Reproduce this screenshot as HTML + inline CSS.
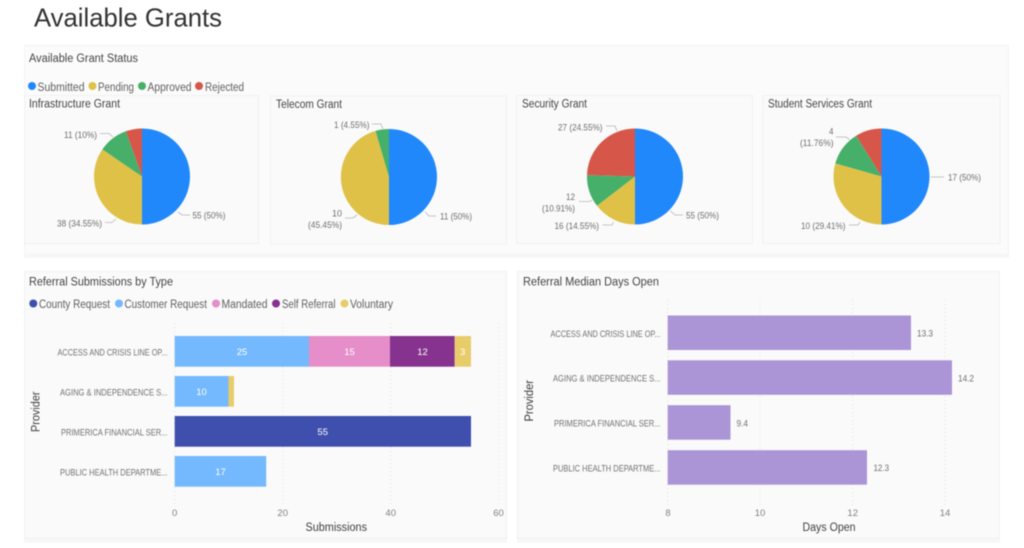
<!DOCTYPE html>
<html lang="en">
<head>
<meta charset="utf-8">
<title>Available Grants</title>
<style>
html,body{margin:0;padding:0;background:#fff;width:1024px;height:548px;overflow:hidden}
svg{display:block;filter:blur(.45px)}
text{font-family:"Liberation Sans",sans-serif}
.t{font-size:11.5px;fill:#444}
.l{font-size:11.5px;fill:#5f5f5f}
.p{font-size:9.5px;fill:#6f6f6f}
.c{font-size:9.5px;fill:#707070}
.a{font-size:9.5px;fill:#808080}
.w{font-size:9.5px;fill:#fff;text-anchor:middle}
.x{font-size:11.5px;fill:#404040}
.ld{fill:none;stroke:#b5b5b5;stroke-width:.8}
.g{stroke:#d8d8d8;stroke-width:.8;stroke-dasharray:1 3}
.card{fill:#fafafa;stroke:#f1f1f1;stroke-width:1}
.outer{fill:#fbfbfb;stroke:#f3f3f3;stroke-width:1}
.sh{fill:#f7f7f7}
</style>
</head>
<body>
<svg width="1024" height="548" viewBox="0 0 1024 548" xmlns="http://www.w3.org/2000/svg">
<rect width="1024" height="548" fill="#fff"/>
<text x="34" y="26.5" font-size="26" fill="#333" textLength="188" lengthAdjust="spacingAndGlyphs">Available Grants</text>

<rect x="24" y="253" width="985" height="5" class="sh"/>
<rect x="24" y="537" width="483" height="6" class="sh"/>
<rect x="517" y="537" width="483" height="6" class="sh"/>
<rect x="24.5" y="45.5" width="984" height="209" class="outer"/>
<text x="29" y="62" class="t" textLength="109" lengthAdjust="spacingAndGlyphs">Available Grant Status</text>

<circle cx="32" cy="86" r="4" fill="#2188fb"/>
<text x="37.5" y="91" class="l" textLength="47" lengthAdjust="spacingAndGlyphs">Submitted</text>
<circle cx="92.5" cy="86" r="4" fill="#dfc147"/>
<text x="98" y="91" class="l" textLength="36" lengthAdjust="spacingAndGlyphs">Pending</text>
<circle cx="142" cy="86" r="4" fill="#46b06a"/>
<text x="147.5" y="91" class="l" textLength="44" lengthAdjust="spacingAndGlyphs">Approved</text>
<circle cx="199" cy="86" r="4" fill="#d6574a"/>
<text x="205" y="91" class="l" textLength="39" lengthAdjust="spacingAndGlyphs">Rejected</text>

<!-- pie cards -->
<rect x="24.5" y="95.5" width="234" height="148" class="card"/>
<rect x="270.5" y="96" width="236" height="148" class="card"/>
<rect x="516.5" y="95.5" width="236" height="148" class="card"/>
<rect x="763" y="95.5" width="237" height="148" class="card"/>
<text x="29" y="107.5" class="t" textLength="91" lengthAdjust="spacingAndGlyphs">Infrastructure Grant</text>
<text x="276" y="108" class="t" textLength="66" lengthAdjust="spacingAndGlyphs">Telecom Grant</text>
<text x="522" y="107.5" class="t" textLength="65" lengthAdjust="spacingAndGlyphs">Security Grant</text>
<text x="768" y="107.5" class="t" textLength="104" lengthAdjust="spacingAndGlyphs">Student Services Grant</text>

<!-- pie 1 -->
<path d="M142 176.5V128.5A48 48 0 0 1 142 224.5Z" fill="#2188fb"/>
<path d="M142 176.5V224.5A48 48 0 0 1 102.4 149.4Z" fill="#dfc147"/>
<path d="M142 176.5L102.4 149.4A48 48 0 0 1 125.9 131.3Z" fill="#46b06a"/>
<path d="M142 176.5L125.9 131.3A48 48 0 0 1 142 128.5Z" fill="#d6574a"/>
<!-- pie 2 -->
<path d="M389 177V129A48 48 0 0 1 389 225Z" fill="#2188fb"/>
<path d="M389 177V225A48 48 0 0 1 375.5 130.9Z" fill="#dfc147"/>
<path d="M389 177L375.5 130.9A48 48 0 0 1 389 129Z" fill="#46b06a"/>
<!-- pie 3 -->
<path d="M635 176.5V128.5A48 48 0 0 1 635 224.5Z" fill="#2188fb"/>
<path d="M635 176.5V224.5A48 48 0 0 1 597 205.8Z" fill="#dfc147"/>
<path d="M635 176.5L597 205.8A48 48 0 0 1 587 175.1Z" fill="#46b06a"/>
<path d="M635 176.5L587 175.1A48 48 0 0 1 635 128.5Z" fill="#d6574a"/>
<!-- pie 4 -->
<path d="M881.5 176.5V128.5A48 48 0 0 1 881.5 224.5Z" fill="#2188fb"/>
<path d="M881.5 176.5V224.5A48 48 0 0 1 835.3 163.4Z" fill="#dfc147"/>
<path d="M881.5 176.5L835.3 163.4A48 48 0 0 1 856.2 135.7Z" fill="#46b06a"/>
<path d="M881.5 176.5L856.2 135.7A48 48 0 0 1 881.5 128.5Z" fill="#d6574a"/>

<!-- pie labels -->
<path class="ld" d="M100 133.5H109L113 137M178 212L182 215H190M116 219L112 222.5H105"/>
<text x="64" y="138" class="p" textLength="33" lengthAdjust="spacingAndGlyphs">11 (10%)</text>
<text x="192.5" y="218.5" class="p" textLength="33" lengthAdjust="spacingAndGlyphs">55 (50%)</text>
<text x="57" y="226.5" class="p" textLength="45" lengthAdjust="spacingAndGlyphs">38 (34.55%)</text>

<path class="ld" d="M372 124H381L383 129M425 212L429 216H436M345 218H353L357 215"/>
<text x="334" y="128" class="p" textLength="35.5" lengthAdjust="spacingAndGlyphs">1 (4.55%)</text>
<text x="440" y="219.5" class="p" textLength="32" lengthAdjust="spacingAndGlyphs">11 (50%)</text>
<text x="332" y="216.5" class="p" textLength="10" lengthAdjust="spacingAndGlyphs">10</text>
<text x="308" y="228" class="p" textLength="34" lengthAdjust="spacingAndGlyphs">(45.45%)</text>

<path class="ld" d="M606 126H615L617 131M670.5 211L675 215H683M579 201.5H590L592 200M602.5 225H612L613.5 222"/>
<text x="558" y="130.5" class="p" textLength="44.5" lengthAdjust="spacingAndGlyphs">27 (24.55%)</text>
<text x="686" y="218.5" class="p" textLength="33" lengthAdjust="spacingAndGlyphs">55 (50%)</text>
<text x="566" y="200" class="p" textLength="9" lengthAdjust="spacingAndGlyphs">12</text>
<text x="542" y="211.5" class="p" textLength="33" lengthAdjust="spacingAndGlyphs">(10.91%)</text>
<text x="554.5" y="229" class="p" textLength="44.5" lengthAdjust="spacingAndGlyphs">16 (14.55%)</text>

<path class="ld" d="M836 137H846L849.5 139.5M931 177H944M849 225H858L860 222"/>
<text x="829" y="134.5" class="p" textLength="4.5" lengthAdjust="spacingAndGlyphs">4</text>
<text x="800" y="146" class="p" textLength="33.5" lengthAdjust="spacingAndGlyphs">(11.76%)</text>
<text x="948" y="180.5" class="p" textLength="33" lengthAdjust="spacingAndGlyphs">17 (50%)</text>
<text x="801" y="229" class="p" textLength="44.5" lengthAdjust="spacingAndGlyphs">10 (29.41%)</text>

<!-- Bottom left card -->
<rect x="24.5" y="271.5" width="482" height="266.5" class="card"/>
<text x="29" y="285.5" class="t" textLength="144" lengthAdjust="spacingAndGlyphs">Referral Submissions by Type</text>
<circle cx="33.3" cy="303.5" r="4" fill="#3f4fae"/>
<text x="39" y="308" class="l" textLength="71" lengthAdjust="spacingAndGlyphs">County Request</text>
<circle cx="119" cy="303.5" r="4" fill="#74b9fd"/>
<text x="124.5" y="308" class="l" textLength="82.5" lengthAdjust="spacingAndGlyphs">Customer Request</text>
<circle cx="216" cy="303.5" r="4" fill="#e68ec9"/>
<text x="221.5" y="308" class="l" textLength="46" lengthAdjust="spacingAndGlyphs">Mandated</text>
<circle cx="276" cy="303.5" r="4" fill="#85338e"/>
<text x="282" y="308" class="l" textLength="53.5" lengthAdjust="spacingAndGlyphs">Self Referral</text>
<circle cx="344.5" cy="303.5" r="4" fill="#e8cc6a"/>
<text x="350" y="308" class="l" textLength="43" lengthAdjust="spacingAndGlyphs">Voluntary</text>

<path class="g" d="M174.7 323V505M282.7 323V505M390.7 323V505M498.5 323V505"/>

<rect x="174.7" y="336" width="134.3" height="30.7" fill="#74b9fd"/>
<rect x="309" y="336" width="81" height="30.7" fill="#e68ec9"/>
<rect x="390" y="336" width="64.7" height="30.7" fill="#85338e"/>
<rect x="454.7" y="336" width="16.3" height="30.7" fill="#e8cc6a"/>
<rect x="174.7" y="376" width="53.8" height="30.7" fill="#74b9fd"/>
<rect x="228.5" y="376" width="5.5" height="30.7" fill="#e8cc6a"/>
<rect x="174.7" y="416" width="296.3" height="30.7" fill="#3f4fae"/>
<rect x="174.7" y="456" width="91.5" height="30.7" fill="#74b9fd"/>

<text x="242" y="355" class="w">25</text>
<text x="349.5" y="355" class="w">15</text>
<text x="422.5" y="355" class="w">12</text>
<text x="462.7" y="355" class="w">3</text>
<text x="201.5" y="395" class="w">10</text>
<text x="322.7" y="435" class="w">55</text>
<text x="220.5" y="475" class="w">17</text>

<text x="57.5" y="355.5" class="c" textLength="110" lengthAdjust="spacingAndGlyphs">ACCESS AND CRISIS LINE OP...</text>
<text x="60" y="395.5" class="c" textLength="107.5" lengthAdjust="spacingAndGlyphs">AGING &amp; INDEPENDENCE S...</text>
<text x="61" y="435.5" class="c" textLength="106.5" lengthAdjust="spacingAndGlyphs">PRIMERICA FINANCIAL SER...</text>
<text x="60" y="475.5" class="c" textLength="107.5" lengthAdjust="spacingAndGlyphs">PUBLIC HEALTH DEPARTME...</text>

<text transform="translate(39.5 432) rotate(-90)" class="x" textLength="40.5" lengthAdjust="spacingAndGlyphs">Provider</text>

<g class="a" text-anchor="middle">
<text x="174.7" y="516">0</text>
<text x="282.7" y="516">20</text>
<text x="390.7" y="516">40</text>
<text x="498.5" y="516">60</text>
</g>
<text x="305.5" y="531" class="x" textLength="61.5" lengthAdjust="spacingAndGlyphs">Submissions</text>

<!-- Bottom right card -->
<rect x="517.5" y="271.5" width="482" height="266.5" class="card"/>
<text x="523" y="285.5" class="t" textLength="136" lengthAdjust="spacingAndGlyphs">Referral Median Days Open</text>

<path class="g" d="M667.7 300V505M760 300V505M852.7 300V505M945 300V505"/>

<rect x="667.7" y="315.5" width="243.3" height="34.5" fill="#ab95d7"/>
<rect x="667.7" y="360.3" width="284.3" height="34.5" fill="#ab95d7"/>
<rect x="667.7" y="405.2" width="62.8" height="34.5" fill="#ab95d7"/>
<rect x="667.7" y="450.2" width="199.3" height="34.5" fill="#ab95d7"/>

<text x="917" y="336.5" class="p" textLength="16" lengthAdjust="spacingAndGlyphs">13.3</text>
<text x="958" y="381.5" class="p" textLength="16" lengthAdjust="spacingAndGlyphs">14.2</text>
<text x="736.5" y="426.5" class="p" textLength="11.5" lengthAdjust="spacingAndGlyphs">9.4</text>
<text x="873.5" y="471" class="p" textLength="15.5" lengthAdjust="spacingAndGlyphs">12.3</text>

<text x="550.5" y="337" class="c" textLength="110" lengthAdjust="spacingAndGlyphs">ACCESS AND CRISIS LINE OP...</text>
<text x="553" y="381.5" class="c" textLength="107.5" lengthAdjust="spacingAndGlyphs">AGING &amp; INDEPENDENCE S...</text>
<text x="554" y="426.5" class="c" textLength="106.5" lengthAdjust="spacingAndGlyphs">PRIMERICA FINANCIAL SER...</text>
<text x="553" y="471.5" class="c" textLength="107.5" lengthAdjust="spacingAndGlyphs">PUBLIC HEALTH DEPARTME...</text>

<text transform="translate(533 421.5) rotate(-90)" class="x" textLength="41.5" lengthAdjust="spacingAndGlyphs">Provider</text>

<g class="a" text-anchor="middle">
<text x="668" y="516">8</text>
<text x="760" y="516">10</text>
<text x="852.7" y="516">12</text>
<text x="945" y="516">14</text>
</g>
<text x="802.5" y="531" class="x" textLength="53" lengthAdjust="spacingAndGlyphs">Days Open</text>
</svg>
</body>
</html>
